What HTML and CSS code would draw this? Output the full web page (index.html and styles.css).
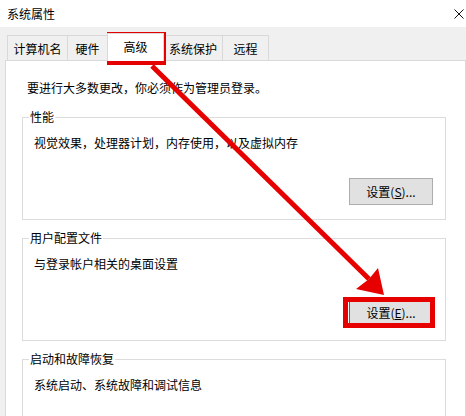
FILE: index.html
```html
<!DOCTYPE html>
<html lang="zh-CN">
<head>
<meta charset="utf-8">
<title>系统属性</title>
<link rel="stylesheet" href="styles.css">
</head>
<body>
<div class="window">
  <div class="titlebar">
    <span class="title">系统属性</span>
    <svg class="close" width="10" height="10" viewBox="0 0 10 10"><path d="M0.5 0.5L9.5 9.5M9.5 0.5L0.5 9.5" stroke="#111" stroke-width="1" fill="none"/></svg>
  </div>
  <div class="client">
    <div class="tabs">
      <div class="tab t1">计算机名</div>
      <div class="tab t2">硬件</div>
      <div class="tab t3 active">高级</div>
      <div class="tab t4">系统保护</div>
      <div class="tab t5">远程</div>
    </div>
    <div class="panel">
      <p class="intro">要进行大多数更改，你必须作为管理员登录。</p>
      <fieldset class="group">
        <legend>性能</legend>
        <p class="desc">视觉效果，处理器计划，内存使用，以及虚拟内存</p>
        <div class="actions"><button class="btn">设置(<u>S</u>)...</button></div>
      </fieldset>
      <fieldset class="group">
        <legend>用户配置文件</legend>
        <p class="desc">与登录帐户相关的桌面设置</p>
        <div class="actions"><button class="btn default">设置(<u>E</u>)...</button></div>
      </fieldset>
      <fieldset class="group last">
        <legend>启动和故障恢复</legend>
        <p class="desc">系统启动、系统故障和调试信息</p>
      </fieldset>
    </div>
  </div>
  <svg class="annot" width="466" height="416" viewBox="0 0 466 416">
    <rect x="109.5" y="34.5" width="54" height="28" fill="none" stroke="#e60000" stroke-width="5"/>
    <rect x="345.5" y="299.5" width="87" height="26" fill="none" stroke="#e60000" stroke-width="5"/>
    <line x1="152" y1="66" x2="369" y2="279" stroke="#e60000" stroke-width="5"/>
    <polygon points="384,295 378,268 369,279 356,289" fill="#e60000"/>
  </svg>
</div>
</body>
</html>
```

FILE: styles.css
```css
* {
  box-sizing: border-box;
}

html,
body {
  margin: 0;
  padding: 0;
}

body {
  width: 466px;
  height: 416px;
  overflow: hidden;
  background: #f0f0f0;
  font-family: "Noto Sans CJK SC", "Microsoft YaHei", sans-serif;
  font-size: 12px;
  line-height: 16px;
  color: #000;
}

.window {
  position: relative;
  width: 466px;
  height: 416px;
}

.titlebar {
  height: 27px;
  background: #fff;
  display: flex;
  align-items: center;
  justify-content: space-between;
  padding: 0 2px 0 7px;
}

.close {
  display: block;
}

.client {
  padding: 8px 0 0 5px;
}

.tabs {
  display: flex;
  align-items: flex-end;
  height: 25px;
  padding-left: 3px;
}

.tab {
  height: 25px;
  margin-left: -1px;
  border: 1px solid #d9d9d9;
  border-bottom: none;
  padding-top: 2px;
  line-height: 22px;
  text-align: center;
  background: #f0f0f0;
}

.t1 { width: 61px; }
.t2 { width: 41px; }
.t3 { width: 57px; }
.t4 { width: 60px; }
.t5 { width: 47px; }

.tab.active {
  position: relative;
  z-index: 1;
  height: 28px;
  margin-bottom: -1px;
  background: #fff;
}

.panel {
  width: 461px;
  height: 400px;
  background: #fff;
  border: 1px solid #d9d9d9;
  padding-top: 19px;
}

.intro {
  margin: 0 0 13px;
  padding-left: 21px;
}

.group {
  margin: 0 19px 10px 16px;
  border: 1px solid #dcdcdc;
  padding: 10px 12px 14px 0;
  min-width: 0;
}

.group.last {
  height: 80px;
}

.group legend {
  margin-left: 6px;
  padding: 0 1px;
  line-height: 16px;
}

.desc {
  margin: 0 0 0 11px;
}

.actions {
  display: flex;
  justify-content: flex-end;
  margin-top: 27px;
}

.btn {
  width: 84px;
  height: 27px;
  padding: 0;
  background: #e1e1e1;
  border: 1px solid #adadad;
  font-family: inherit;
  font-size: 12px;
  color: #000;
}

.btn.default {
  border-color: #0078d7;
}

.annot {
  position: absolute;
  left: 0;
  top: 0;
  pointer-events: none;
}
```
